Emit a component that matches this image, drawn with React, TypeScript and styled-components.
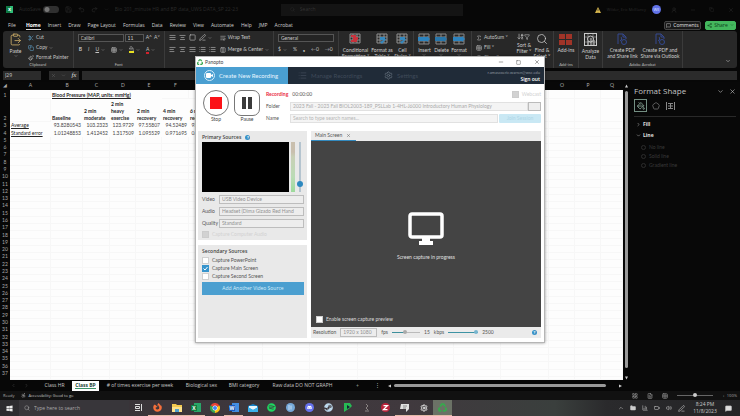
import React from "react";
import styled, { createGlobalStyle, css } from "styled-components";
import {
  AlignCenter, AlignJustify, AlignLeft, Battery, BarChart3, ChevronDown, ChevronLeft, ChevronRight, ChevronUp,
  ClipboardPaste, Copy, Disc, FileText, Folder, Grid3x3, LayoutGrid, List, MessageSquare, Minus, Paintbrush, PaintBucket,
  PenLine, Pentagon, Redo2, Save, Scissors, Search, Settings, Share2, Sigma, Square, Table, Undo2, Volume2,
  WrapText, X, ArrowDownAZ, Funnel, Columns3, Accessibility, UserRound,
} from "lucide-react";
import { FaDiscord, FaSpotify, FaSteam, FaWindows, FaFirefoxBrowser } from "react-icons/fa";

const Global = createGlobalStyle`
  *, *::before, *::after { box-sizing: border-box; }
  body { margin: 0; background: #050505; }
  button, input, select { font: inherit; color: inherit; margin: 0; padding: 0; border: 0; background: none; border-radius: 0; }
  svg { display: block; flex: none; }
`;

const ui = `"Open Sans", "Noto Sans", sans-serif`;
const compact = `Lato, "Liberation Sans", sans-serif`;

/* ---------- window frame ---------- */
const Page = styled.div`
  position: relative;
  display: flex;
  flex-direction: column;
  min-height: 100vh;
  overflow: hidden;
  background: #070707;
  color: #d0d0d0;
  font: 5px/7px ${ui};
  white-space: nowrap;
`;
const TitleBar = styled.header`
  display: flex;
  align-items: center;
  height: 19px;
  padding: 0 3px 0 6px;
  gap: 6px;
  color: #2b2b2b;
`;
const ExcelBadge = styled.span`
  display: grid;
  place-items: center;
  width: 7px;
  height: 7px;
  background: linear-gradient(90deg, #0f7a43 55%, #2dba77 55%);
  color: #fff;
  font-weight: 700;
`;
const AutoSave = styled.span`
  display: flex;
  align-items: center;
  gap: 2px;
`;
const Toggle = styled.span`
  width: 16px;
  height: 7px;
  border-radius: 4px;
  background: radial-gradient(circle at 4px 50%, #777 0 2px, #303030 3px);
`;
const DocName = styled.span`
  width: 140px;
  overflow: hidden;
`;
const TitleSearch = styled.label`
  display: flex;
  align-items: center;
  gap: 5px;
  flex: 1;
  max-width: 182px;
  height: 12px;
  margin-left: 20px;
  padding: 0 9px;
  background: #141414;
  input { width: 60px; &::placeholder { color: #333; opacity: 1; } }
`;
const TitleRight = styled.div`
  display: flex;
  align-items: center;
  gap: 6px;
  margin-left: auto;
  font-size: 4px;
`;
const Avatar = styled.span`
  display: grid;
  place-items: center;
  width: 9px;
  height: 9px;
  border-radius: 50%;
  background: #6172e8;
  color: #dfe3ff;
`;
const CaptionButton = styled.button`
  display: grid;
  place-items: center;
  width: 13px;
  height: 10px;
`;
const MenuBar = styled.nav`
  display: flex;
  align-items: center;
  gap: 7px;
  height: 12px;
  padding: 0 4px 0 8px;
`;
const MenuItem = styled.button<{ $active?: boolean }>`
  height: 10px;
  line-height: 8px;
  &:first-child { margin-right: 3px; }
  ${(p) => p.$active && css`color: #fff; font-weight: 700; border-bottom: 1px solid #ddd;`}
`;
const MenuActions = styled.div`
  display: flex;
  gap: 4px;
  margin-left: auto;
`;
const PillButton = styled.button<{ $green?: boolean }>`
  display: flex;
  align-items: center;
  justify-content: center;
  gap: 2px;
  width: ${(p) => (p.$green ? 31 : 37)}px;
  height: 9px;
  border: 1px solid ${(p) => (p.$green ? "#43b75d" : "#444")};
  border-radius: 2px;
  background: ${(p) => (p.$green ? "#43b75d" : "#191919")};
  color: ${(p) => (p.$green ? "#10401c" : "#e4e4e4")};
`;

/* ---------- ribbon ---------- */
const Ribbon = styled.section`
  display: flex;
  height: 37px;
  margin: 0 3px;
  border-radius: 3px;
  background: #282828;
  font-family: ${compact};
  overflow: hidden;
`;
const Group = styled.div<{ $w: number }>`
  position: relative;
  display: flex;
  flex: 0 0 ${(p) => p.$w}px;
  gap: 4px;
  padding: 2px 4px 0;
  border-right: 1px solid #3b3b3b;
`;
const GroupName = styled.span`
  position: absolute;
  left: 0;
  right: 0;
  bottom: 0;
  text-align: center;
  font-size: 4px;
  color: #bbb;
`;
const Stack = styled.div<{ $gap?: number }>`
  display: flex;
  flex-direction: column;
  gap: ${(p) => p.$gap ?? 3}px;
`;
const ToolRow = styled.div<{ $gap?: number }>`
  display: flex;
  align-items: center;
  gap: ${(p) => p.$gap ?? 5}px;
  height: 9px;
`;
const Tool = styled.button<{ $color?: string }>`
  display: flex;
  align-items: center;
  gap: 2px;
  height: 7px;
  color: ${(p) => p.$color ?? "#c4c4c4"};
`;
const BigTool = styled.button<{ $w: number }>`
  display: flex;
  flex-direction: column;
  align-items: center;
  flex: 0 0 ${(p) => p.$w}px;
  width: ${(p) => p.$w}px;
  height: 28px;
  line-height: 6px;
  color: #d0d0d0;
  svg { margin-bottom: 2px; }
`;
const DarkSelect = styled.select<{ $w: number }>`
  appearance: none;
  width: ${(p) => p.$w}px;
  height: 8px;
  padding: 0 2px;
  border: 1px solid #555;
  background: #242424;
  color: #c8c8c8;
`;
const Swatch = styled.span<{ $c: string }>`
  border-bottom: 2px solid ${(p) => p.$c};
  line-height: 6px;
`;
const Push = styled.span`
  margin: auto 6px 4px auto;
`;

const FormulaBar = styled.div`
  display: flex;
  gap: 3px;
  height: 9px;
  margin: 3px 3px 2px;
  color: #999;
`;
const NameBox = styled.input`
  width: 38px;
  padding: 0 2px;
  background: #2b2b2b;
  color: #ccc;
`;
const FormulaTools = styled.div`
  display: flex;
  align-items: center;
  justify-content: space-around;
  width: 30px;
  margin-left: 5px;
  background: #2b2b2b;
  i { font-family: "Liberation Serif", serif; font-size: 7px; color: #ddd; }
`;
const FormulaInput = styled.input`
  flex: 1;
  background: #2b2b2b;
`;

/* ---------- worksheet ---------- */
const Work = styled.main`
  display: flex;
  flex: 1;
  min-height: 0;
`;
const SheetArea = styled.div`
  display: flex;
  flex: 1;
  min-width: 0;
  background: #fdfdfd;
`;
const Sheet = styled.table`
  flex: 1;
  display: grid;
  grid-template-columns: minmax(0, 1fr);
  grid-template-rows: 8px 1fr;
  font-family: ${compact};
  line-height: 7px;
  color: #222;
  overflow: hidden;
`;
const columns = "10px 41px 32px 27px 26px 26px 27px 26px repeat(7, minmax(0, 1fr)) 26px 26px 22px";
const SheetHead = styled.thead`
  background: #080808;
  color: #aaa;
`;
const SheetBody = styled.tbody`
  display: grid;
  grid-template-columns: minmax(0, 1fr);
  grid-template-rows: 9px 23px repeat(35, minmax(7px, 1fr)) 3px;
`;
const SheetRow = styled.tr`
  display: grid;
  grid-template-columns: ${columns};
  min-height: 0;
`;
const RowNumber = styled.th`
  display: flex;
  align-items: flex-end;
  justify-content: center;
  padding: 0;
  background: #080808;
  color: #aaa;
  font-weight: 400;
  overflow: hidden;
`;
const ColName = styled.th`
  padding: 0;
  font-weight: 400;
`;
const Cell = styled.td<{ $kind?: "num" | "head" | "title" | "link" }>`
  display: flex;
  align-items: flex-end;
  min-width: 0;
  padding: 0 1px;
  border-right: 1px solid #f7f7f7;
  border-bottom: 1px solid #f7f7f7;
  white-space: pre;
  ${(p) => p.$kind && css`border-right-color: transparent; border-bottom: 0;`}
  ${(p) => p.$kind === "num" && css`justify-content: flex-end; color: #444;`}
  ${(p) => (p.$kind === "head" || p.$kind === "title") && css`font-weight: 700;`}
  ${(p) => (p.$kind === "title" || p.$kind === "link") && css`text-decoration: underline;`}
`;
const ScrollTrack = styled.div`
  display: flex;
  flex-direction: column;
  align-items: center;
  width: 7px;
  padding-top: 2px;
  color: #bbb;
`;
const ScrollThumb = styled.div`
  flex: 1;
  width: 3px;
  margin: 3px 0 8px;
  border-radius: 2px;
  background: #9a9a9a;
`;

const FormatPane = styled.aside`
  width: 110px;
  padding: 3px 4px;
  background: #080808;
`;
const PaneHead = styled.div`
  display: flex;
  align-items: center;
  gap: 5px;
  height: 12px;
  color: #c4c4c4;
  h2 { flex: 1; margin: 0; font-size: 8px; font-weight: 400; line-height: 12px; }
`;
const PaneTabs = styled.div`
  display: flex;
  gap: 2px;
  margin-top: 2px;
  padding-bottom: 4px;
  border-bottom: 1px solid #292929;
`;
const PaneTab = styled.button<{ $active?: boolean }>`
  display: grid;
  place-items: center;
  width: 13px;
  height: 13px;
  color: #888;
  border: 1px solid ${(p) => (p.$active ? "#748f83" : "transparent")};
`;
const PaneSection = styled.button`
  display: flex;
  align-items: center;
  gap: 2px;
  height: 7px;
  margin: 4px 0 0 2px;
  color: #e0e0e0;
  font-weight: 700;
`;
const RadioList = styled.div`
  display: grid;
  gap: 2px;
  padding: 5px 0 0 7px;
`;
const RadioRow = styled.label`
  display: flex;
  align-items: center;
  gap: 3px;
  height: 7px;
  color: #3a3a3a;
  font-family: ${compact};
  input { appearance: none; width: 5px; height: 5px; border: 1px solid #2c2c2c; border-radius: 50%; }
`;

const Tabs = styled.nav`
  display: flex;
  align-items: center;
  height: 11px;
  padding-left: 11px;
  color: #c8c8c8;
`;
const SheetTab = styled.button<{ $active?: boolean; $w: number }>`
  flex: 0 0 ${(p) => p.$w}px;
  height: 10px;
  line-height: 9px;
  text-align: center;
  ${(p) => p.$active && css`
    background: #fff; color: #254536; font-weight: 700;
    span { border-bottom: 1px solid #3b9168; }
  `}
`;
const TabArrow = styled.button`
  width: 13px;
  color: #555;
`;
const HScroll = styled.div`
  display: flex;
  align-items: center;
  gap: 3px;
  flex: 1;
  margin-right: 118px;
  span { margin-right: 5px; }
  div { flex: 1; height: 3px; margin-right: 10px; border-radius: 2px; background: #999; }
`;
const Status = styled.footer`
  display: flex;
  align-items: center;
  gap: 7px;
  height: 9px;
  padding: 0 3px;
  background: #111;
  color: #aaa;
  font-size: 4px;
`;
const ViewTools = styled.div`
  display: flex;
  align-items: center;
  gap: 9px;
  margin-left: auto;
`;
const Range = styled.input<{ $track?: string; $thumb?: string; $w: number }>`
  appearance: none;
  width: ${(p) => p.$w}px;
  height: 6px;
  &::-webkit-slider-runnable-track { height: 1px; background: ${(p) => p.$track ?? "#666"}; }
  &::-webkit-slider-thumb {
    appearance: none; width: 4px; height: 4px; margin-top: -2px; border-radius: 50%;
    background: ${(p) => p.$thumb ?? "#ccc"};
  }
`;

/* ---------- taskbar ---------- */
const TaskBar = styled.nav`
  display: flex;
  align-items: stretch;
  height: 16px;
  background: linear-gradient(90deg, #2c2b2e, #3c363b 22%, #40393e 55%, #3a3f3d 75%, #2a2a2c 82%, #242426);
`;
const StartButton = styled.button`
  display: grid;
  place-items: center;
  width: 19px;
  color: #eee;
`;
const TaskSearch = styled.label`
  display: flex;
  align-items: center;
  gap: 4px;
  width: 110px;
  padding-left: 5px;
  background: #38363a;
  color: #aaa;
  input { width: 80px; &::placeholder { color: #aaa; opacity: 1; } }
`;
const TaskIcon = styled.button<{ $open?: boolean; $active?: boolean }>`
  display: grid;
  place-items: center;
  width: 19px;
  color: #e6e6e6;
  border-bottom: 1px solid ${(p) => (p.$open ? "#e3b9a7" : "transparent")};
  background: ${(p) => (p.$active ? "#6b7266" : "none")};
`;
const Tray = styled.div`
  display: flex;
  align-items: center;
  gap: 6px;
  margin-left: auto;
  padding-right: 8px;
  color: #c8c8c8;
`;
const Clock = styled.time`
  width: 28px;
  text-align: center;
  line-height: 7px;
`;

/* ---------- recorder dialog ---------- */
const Recorder = styled.section`
  position: absolute;
  inset: 56px 195px 73px;
  display: flex;
  flex-direction: column;
  border: 1px solid #b5b5b5;
  background: #fff;
  color: #555;
  font-family: ${compact};
  box-shadow: 0 0 3px rgba(0, 0, 0, 0.4);
`;
const RecTitle = styled.header`
  display: flex;
  align-items: center;
  gap: 2px;
  height: 10px;
  padding: 0 1px;
  color: #444;
`;
const RecCaption = styled.div`
  display: flex;
  gap: 5px;
  margin-left: auto;
`;
const RecNav = styled.nav`
  display: flex;
  align-items: stretch;
  height: 17px;
  background: #202b38;
`;
const NavTab = styled.button<{ $w: number; $active?: boolean }>`
  display: flex;
  align-items: center;
  gap: 4px;
  width: ${(p) => p.$w}px;
  padding-left: ${(p) => (p.$active ? 8 : 10)}px;
  font-size: 6px;
  color: ${(p) => (p.$active ? "#e8f5ff" : "#3f4a58")};
  background: ${(p) => (p.$active ? "#4a9fd1" : "none")};
`;
const CamRing = styled.span`
  display: grid;
  place-items: center;
  width: 11px;
  height: 11px;
  border: 1px solid #d4ecfa;
  border-radius: 50%;
`;
const Account = styled.div`
  margin-left: auto;
  padding: 2px 4px 0 0;
  text-align: right;
  color: #8a939d;
  font-size: 4px;
  a { display: block; color: #fff; font: 600 5px/7px ${ui}; text-decoration: none; }
`;
const Controls = styled.div`
  display: grid;
  grid-template-columns: 26px 26px 1fr;
  gap: 5px;
  height: 47px;
  padding: 6px 3px 0 7px;
`;
const BigControl = styled.button<{ $round?: boolean }>`
  display: flex;
  flex-direction: column;
  align-items: center;
  color: #444;
  > span {
    display: flex; align-items: center; justify-content: center; gap: 2px;
    width: 26px; height: 26px;
    border: 1px solid #777; border-radius: ${(p) => (p.$round ? "50%" : "7px")};
  }
`;
const StopMark = styled.i`
  width: 12px;
  height: 12px;
  background: #fb1217;
`;
const PauseMark = styled.i`
  width: 4px;
  height: 12px;
  background: #3b3b3b;
`;
const Fields = styled.div`
  display: grid;
  grid-template-columns: 24px 1fr;
  grid-template-rows: 9px 9px 9px;
  row-gap: 3px;
  align-items: center;
  padding-left: 1px;
`;
const RecLine = styled.div`
  grid-column: 1 / -1;
  display: flex;
  gap: 4px;
  b { color: #ea2e3f; }
`;
const FieldRow = styled.div`
  display: flex;
  height: 9px;
`;
const TextBox = styled.input`
  flex: 1;
  min-width: 0;
  padding: 0 2px;
  border: 1px solid #e1e1e1;
  background: #f4f4f4;
  color: #aaa;
  &::placeholder { color: #b5b5b5; opacity: 1; }
`;
const Browse = styled.button`
  width: 13px;
  border: 1px solid #bbb;
  background: #eee;
  line-height: 5px;
`;
const Join = styled.button`
  width: 42px;
  margin-left: 1px;
  border-radius: 1px;
  background: #c9e8f4;
  color: #aed6e7;
`;
const Check = styled.label<{ $dim?: boolean }>`
  display: flex;
  align-items: center;
  gap: 3px;
  color: ${(p) => (p.$dim ? "#d2d2d2" : "#555")};
  input {
    appearance: none; width: 7px; height: 7px; flex: none;
    border: 1px solid ${(p) => (p.$dim ? "#ccc" : "#d0d0d0")};
    background: ${(p) => (p.$dim ? "#d2d2d2" : "#fff")};
  }
  input:checked {
    border-color: #3794cc;
    background: #3794cc url("data:image/svg+xml,%3Csvg xmlns='http://www.w3.org/2000/svg' viewBox='0 0 10 10'%3E%3Cpath d='M1 5l3 3L9 2' fill='none' stroke='white' stroke-width='2'/%3E%3C/svg%3E") center / contain;
  }
`;
const RecMain = styled.div`
  display: grid;
  grid-template-columns: 109px 1fr;
  gap: 4px;
  flex: 1;
  min-height: 0;
  padding: 0 3px 4px 2px;
`;
const Sources = styled.div`
  display: flex;
  flex-direction: column;
  gap: 5px;
  min-height: 0;
`;
const Panel = styled.section<{ $grow?: boolean }>`
  flex: ${(p) => (p.$grow ? "1" : "none")};
  padding: 2px 3px 2px 4px;
  background: #e9e9e9;
  h3 { display: flex; align-items: center; gap: 4px; margin: 0; font: 600 5px/9px ${ui}; color: #444; }
`;
const Help = styled.span`
  display: grid;
  place-items: center;
  width: 5px;
  height: 5px;
  border-radius: 50%;
  background: #3690c6;
  color: #fff;
  font: 700 4px/5px ${ui};
`;
const PreviewRow = styled.div`
  display: grid;
  grid-template-columns: 1fr 5px 8px;
  gap: 1px;
  height: 50px;
  margin-bottom: 3px;
`;
const CameraView = styled.div`
  background: #000;
`;
const Meter = styled.div`
  margin-left: 1px;
  background: linear-gradient(#c9bfae 0 20%, #c8d0b6 30%, #bbdcb6 70%, #9cda9b);
`;
const Volume = styled.input`
  appearance: none;
  writing-mode: vertical-lr;
  direction: rtl;
  width: 8px;
  height: 50px;
  background: linear-gradient(90deg, transparent 3px, #b5c4cf 3px 5px, transparent 5px);
  &::-webkit-slider-thumb { appearance: none; width: 6px; height: 6px; border-radius: 50%; background: #2d88bf; }
`;
const SourceField = styled.label`
  display: grid;
  grid-template-columns: 17px 1fr;
  align-items: center;
  height: 9px;
  margin-bottom: 3px;
`;
const LightSelect = styled.select`
  appearance: none;
  height: 9px;
  min-width: 0;
  padding: 0 2px;
  border: 1px solid #bdbdbd;
  background: #ededed;
  color: #929292;
`;
const CheckList = styled.div`
  display: grid;
  gap: 1px;
  margin: 1px 0 2px;
`;
const AddButton = styled.button`
  width: 100%;
  height: 13px;
  background: #4b9fd0;
  color: #d9effc;
  font-family: ${ui};
`;
const Viewer = styled.section`
  display: grid;
  grid-template-rows: 10px 1fr 11px;
  min-height: 0;
  background: #ebebeb;
`;
const ViewTab = styled.button`
  display: flex;
  align-items: center;
  justify-content: space-between;
  width: 45px;
  padding: 0 5px 0 4px;
  border-bottom: 1px solid #338abf;
`;
const Stage = styled.div`
  display: flex;
  flex-direction: column;
  background: #444;
  color: #e0e0e0;
`;
const StageCenter = styled.div`
  display: flex;
  flex: 1;
  flex-direction: column;
  align-items: center;
  justify-content: center;
  gap: 9px;
  padding-top: 16px;
`;
const StageFoot = styled.div`
  padding: 0 5px 4px;
  label { color: #ddd; }
`;
const Encode = styled.div`
  display: flex;
  align-items: center;
  gap: 4px;
  padding: 0 4px 0 2px;
  select { width: 37px; }
  label { display: flex; align-items: center; gap: 4px; }
`;
const End = styled.span`
  margin-left: auto;
`;

/* ---------- drawings ---------- */
const PanoptoMark = ({ s = 6 }: { s?: number }) => (
  <svg width={s} height={s} viewBox="0 0 24 24" fill="none" stroke="#38a84d" strokeWidth="5">
    <path d="M6 9 L10 3 H15 L19 9" /><path d="M20 12 L22 18 L18 21 H13" /><path d="M9 21 H4 L2 17 L5 12" />
  </svg>
);
const MonitorMark = () => (
  <svg width="36" height="33" viewBox="0 0 36 33">
    <rect x="2" y="2" width="32" height="23" rx="2" fill="none" stroke="#fff" strokeWidth="3.500" />
    <path d="M14 26h8v3h3v4H11v-4h3z" fill="#fff" />
  </svg>
);
const CameraMark = () => (
  <svg width="7" height="5" viewBox="0 0 7 5" fill="#fff"><rect width="5" height="5" rx="1" /><path d="M5 2l2-1v3l-2-1z" /></svg>
);
const Triangle = ({ dir }: { dir: "up" | "down" | "left" | "right" }) => {
  const d = { up: "M0 4l2-4 2 4z", down: "M0 0l2 4 2-4z", left: "M4 0L0 2l4 2z", right: "M0 0l4 2-4 2z" }[dir];
  return <svg width="3" height="4" viewBox="0 0 4 4"><path d={d} fill="#ccc" /></svg>;
};
const TableMark = ({ c, arrow }: { c: string; arrow?: boolean }) => (
  <svg width="12" height="12" viewBox="0 0 12 12">
    <path d="M1 1h10v9H1zM1 4h10M1 7h10M4 1v9M8 1v9" fill="none" stroke="#909090" strokeWidth="1" />
    <rect x="4" y="4" width="5" height="3" fill={c} />
    {arrow ? <path d="M11 5l-5 6-2-2z" fill={c} /> : <path d="M2 2h5v2H2zM2 7h6v2H2z" fill={c} />}
  </svg>
);
const CellMark = ({ c }: { c: string }) => (
  <svg width="12" height="12" viewBox="0 0 12 12">
    <path d="M1 1h10v10H1zM1 4h10M1 8h10M6 1v10" fill="none" stroke="#888" />
    <rect y="4" width="9" height="4" fill={c} /><path d="M9 3l3 3-3 3z" fill={c} />
  </svg>
);
const AddinMark = () => (
  <svg width="13" height="12" viewBox="0 0 13 12" fill="#a03428">
    <rect y="1" width="6" height="5" /><rect x="7" y="1" width="6" height="5" /><rect y="7" width="6" height="5" /><rect x="7" y="7" width="6" height="5" />
  </svg>
);
const AnalyzeMark = () => (
  <svg width="13" height="13" viewBox="0 0 13 13" fill="none" stroke="#ccc">
    <rect x="0.500" y="0.500" width="12" height="12" /><path d="M1 4h11M1 9h11M4 1v11M9 1v11" stroke="#777" />
    <circle cx="6.500" cy="6" r="3" fill="#333" /><path d="M4 12V8M7 12V5M10 12V7" />
  </svg>
);
const PdfMark = () => (
  <svg width="12" height="12" viewBox="0 0 12 12" fill="none" stroke="#34498f">
    <path d="M2 11V1h5l3 3v2M7 1v3h3" /><circle cx="8" cy="9" r="2.500" /><path d="M4 8c2-1 2-3 1-4" />
  </svg>
);
const SizeMark = () => (
  <svg width="9" height="8" viewBox="0 0 9 8" fill="none" stroke="#888"><path d="M.5 0v8M8.500 0v8M2 1.500h5M2 6.500h5M4.500 1v6M2 4h5" /></svg>
);
const TaskViewMark = () => (
  <svg width="7" height="7" viewBox="0 0 7 7" fill="none" stroke="#ddd"><path d="M.5 2.500h4v2h-4zM0 .5h5M0 6.500h5M6.500 0v7" /></svg>
);
const ChromeMark = () => (
  <svg width="10" height="10" viewBox="0 0 20 20">
    <path d="M10 10L1.300 5A10 10 0 0 1 18.700 5z" fill="#e94335" /><path d="M10 10L18.700 5A10 10 0 0 1 10 20z" fill="#fbc116" />
    <path d="M10 10L10 20A10 10 0 0 1 1.300 5z" fill="#34a853" /><circle cx="10" cy="10" r="5" fill="#fff" /><circle cx="10" cy="10" r="4" fill="#4285f4" />
  </svg>
);
const FolderMark = () => (
  <svg width="10" height="8" viewBox="0 0 10 8"><path d="M0 0h4l1 1h5v7H0z" fill="#f3c94f" /><path d="M0 3h10v5H0z" fill="#fbe18c" /><path d="M3 5h4v3H3z" fill="#4f9fcd" /></svg>
);
const OfficeMark = ({ a, b, t }: { a: string; b: string; t: string }) => (
  <svg width="10" height="9" viewBox="0 0 10 9">
    <rect x="3" width="7" height="9" fill={b} /><rect y="2" width="6" height="6" fill={a} />
    <text x="3" y="7" textAnchor="middle" fontSize="5" fontWeight="700" fill="#fff" fontFamily="Open Sans">{t}</text>
  </svg>
);
const MailMark = () => (
  <svg width="10" height="8" viewBox="0 0 10 8"><path d="M0 2l5-2 5 2v6H0z" fill="#1683c9" /><path d="M1 2h8v2L5 6 1 4z" fill="#e9f5fc" /><path d="M0 3l5 3 5-3v5H0z" fill="#39b1ec" /></svg>
);
const DiscMark = ({ c, children }: { c: string; children?: React.ReactNode }) => (
  <svg width="9" height="9" viewBox="0 0 18 18"><circle cx="9" cy="9" r="9" fill={c} />{children}</svg>
);
const PlayMark = () => (
  <svg width="8" height="9" viewBox="0 0 8 9"><path d="M0 0h6l2 3-2 2-6 4z" fill="#27ba54" /><path d="M3 2l3 2-3 2z" fill="#123" /></svg>
);
const LampMark = () => (
  <svg width="6" height="9" viewBox="0 0 6 9" fill="none" stroke="#8b8585"><path d="M2 1l2 2-2 2 2 2M1 8h4" /></svg>
);
const CardsMark = () => (
  <svg width="9" height="8" viewBox="0 0 9 8"><path d="M1 0h8v5l-3 3V5H0z" fill="#dedede" /><path d="M3 2h4M3 4h3" stroke="#888" /></svg>
);

/* ---------- data ---------- */
const letters = "ABCDEFGHIJKLMNOPQ".split("");
const menu = ["File", "Home", "Insert", "Draw", "Page Layout", "Formulas", "Data", "Review", "View", "Automate", "Help", "JMP", "Acrobat"];
const heads = ["", "Baseline", "2 min\nmoderate", "2 min\nheavy\nexercise", "2 min\nrecovery", "4 min\nrecovery", "6 min\nrecovery"];
const rows: Record<number, string[]> = {
  3: ["Average", "93.8280543", "103.2323", "123.9729", "97.55807", "94.52489", "93.21548"],
  4: ["Standard error", "1.01248853", "1.412452", "1.317509", "1.095529", "0.971695", "0.984512"],
};
const sheetTabs: [string, number][] = [
  ["Class HR", 35], ["Class BP", 27], ["# of times exercise per week", 82], ["Biological sex", 41], ["BMI category", 44], ["Raw data DO NOT GRAPH", 73],
];

function cellsFor(n: number) {
  return letters.map((l, i) => {
    if (n === 1 && i === 1) return <Cell key={l} $kind="title">Blood Pressure (MAP, units: mmHg)</Cell>;
    if (n === 1 && i > 1 && i < 5) return <Cell key={l} $kind="num" />;
    if (n === 2 && heads[i]) return <Cell key={l} $kind="head">{heads[i]}</Cell>;
    const v = rows[n]?.[i];
    if (v) return <Cell key={l} $kind={i === 0 ? "link" : "num"}>{v}</Cell>;
    return <Cell key={l} />;
  });
}

const icon = { size: 7, strokeWidth: 2 };

export default function App() {
  return (
    <Page>
      <Global />
      <TitleBar>
        <ExcelBadge>x</ExcelBadge>
        <AutoSave>AutoSave <Toggle /></AutoSave>
        <Save {...icon} /><Undo2 {...icon} /><Redo2 {...icon} /><ChevronDown size={5} />
        <DocName>Bio 201_minute HR and BP data_UWS DATA_SP 22-23</DocName>
        <TitleSearch><Search size={5} /><input aria-label="Search" placeholder="Search" /></TitleSearch>
        <TitleRight>
          <svg width="6" height="6" viewBox="0 0 6 6"><path d="M3 0l3 6H0z" fill="#d5b44a" /><path d="M3 2v2M3 5v.5" stroke="#333" strokeWidth=".7" /></svg>
          <span>Wilder, Eric McElancy</span><Avatar>WE</Avatar>
          <CaptionButton aria-label="Account"><UserRound size={6} /></CaptionButton>
          <CaptionButton aria-label="Minimize"><Minus size={6} /></CaptionButton>
          <CaptionButton aria-label="Restore"><Copy size={5} /></CaptionButton>
          <CaptionButton aria-label="Close"><X size={6} /></CaptionButton>
        </TitleRight>
      </TitleBar>
      <MenuBar>
        {menu.map((m) => <MenuItem key={m} $active={m === "Home"}>{m}</MenuItem>)}
        <MenuActions>
          <PillButton><MessageSquare size={5} />Comments</PillButton>
          <PillButton $green><Share2 size={5} />Share<ChevronDown size={4} /></PillButton>
        </MenuActions>
      </MenuBar>

      <Ribbon>
        <Group $w={68}>
          <BigTool $w={17}><ClipboardPaste size={13} color="#d3b36b" strokeWidth={1.5} />Paste<ChevronDown size={4} /></BigTool>
          <Stack $gap={1}>
            <ToolRow><Tool><Scissors size={6} color="#62a5cf" />Cut</Tool></ToolRow>
            <ToolRow><Tool><Copy size={6} color="#62a5cf" />Copy<ChevronDown size={4} /></Tool></ToolRow>
            <ToolRow><Tool><Paintbrush size={6} />Format Painter</Tool></ToolRow>
          </Stack>
          <GroupName>Clipboard</GroupName>
        </Group>
        <Group $w={91}>
          <Stack>
            <ToolRow $gap={1}>
              <DarkSelect $w={46} aria-label="Font"><option>Calibri</option></DarkSelect>
              <DarkSelect $w={19} aria-label="Font size"><option>11</option></DarkSelect>
              <Tool>&nbsp;A^</Tool><Tool>&nbsp;A˅</Tool>
            </ToolRow>
            <ToolRow $gap={6}>
              <Tool><b>&nbsp;B</b></Tool><Tool><i>I</i></Tool><Tool><u>U</u><ChevronDown size={4} /></Tool>
              <Tool><Grid3x3 size={6} /><ChevronDown size={4} /></Tool>
              <Tool><Swatch $c="#e8e121"><PaintBucket size={5} /></Swatch><ChevronDown size={4} /></Tool>
              <Tool><Swatch $c="#d2222c">A</Swatch><ChevronDown size={4} /></Tool>
            </ToolRow>
          </Stack>
          <GroupName>Font</GroupName>
        </Group>
        <Group $w={109}>
          <Stack>
            <ToolRow $gap={3}><Tool><AlignJustify {...icon} /></Tool><Tool><AlignCenter {...icon} /></Tool><Tool><Square {...icon} /></Tool><Tool><PenLine {...icon} /><ChevronDown size={4} /></Tool></ToolRow>
            <ToolRow $gap={3}><Tool><AlignLeft {...icon} /></Tool><Tool><AlignCenter {...icon} /></Tool><Tool><AlignJustify {...icon} /></Tool><Tool><List {...icon} /></Tool><Tool><List {...icon} /></Tool></ToolRow>
          </Stack>
          <Stack>
            <ToolRow><Tool><WrapText size={6} />Wrap Text</Tool></ToolRow>
            <ToolRow><Tool><Columns3 size={6} />Merge &amp; Center<ChevronDown size={4} /></Tool></ToolRow>
          </Stack>
        </Group>
        <Group $w={63}>
          <Stack>
            <ToolRow><DarkSelect $w={56} aria-label="Number format"><option>General</option></DarkSelect></ToolRow>
            <ToolRow $gap={6}><Tool>$<ChevronDown size={4} /></Tool><Tool>%</Tool><Tool><b>❟</b></Tool><Tool>←0</Tool><Tool>→0</Tool></ToolRow>
          </Stack>
        </Group>
        <Group $w={74}>
          <BigTool $w={25}><TableMark c="#c8323c" />Conditional<span>Formatting ˅</span></BigTool>
          <BigTool $w={20}><TableMark c="#3688bd" arrow />Format as<span>Table ˅</span></BigTool>
          <BigTool $w={13}><TableMark c="#3688bd" arrow />Cell<span>Styles ˅</span></BigTool>
        </Group>
        <Group $w={58}>
          <BigTool $w={13}><CellMark c="#2d83be" />Insert<ChevronDown size={4} /></BigTool>
          <BigTool $w={13}><CellMark c="#2876aa" />Delete<ChevronDown size={4} /></BigTool>
          <BigTool $w={14}><CellMark c="#2d83be" />Format<ChevronDown size={4} /></BigTool>
        </Group>
        <Group $w={82}>
          <Stack $gap={1}>
            <ToolRow><Tool><Sigma size={6} />AutoSum ˅</Tool></ToolRow>
            <ToolRow><Tool><Table size={6} />Fill ˅</Tool></ToolRow>
            <ToolRow><Tool><Disc size={6} />Clear ˅</Tool></ToolRow>
          </Stack>
          <End><BigTool $w={14}><ToolRow $gap={0}><ArrowDownAZ size={7} /><Funnel size={6} /></ToolRow><span>Sort &amp;</span><span>Filter ˅</span></BigTool></End>
          <BigTool $w={14}><Search size={12} strokeWidth={1.5} />Find &amp;<span>Select ˅</span></BigTool>
        </Group>
        <Group $w={25}><BigTool $w={16}><AddinMark />Add-ins</BigTool><GroupName>Add-ins</GroupName></Group>
        <Group $w={23}><BigTool $w={15}><AnalyzeMark />Analyze<span>Data</span></BigTool></Group>
        <Group $w={79}>
          <BigTool $w={31}><PdfMark />Create PDF<span>and Share link</span></BigTool>
          <BigTool $w={36}><PdfMark />Create PDF and<span>Share via Outlook</span></BigTool>
          <GroupName>Adobe Acrobat</GroupName>
        </Group>
        <Push><ChevronDown size={6} /></Push>
      </Ribbon>

      <FormulaBar>
        <NameBox aria-label="Name box" defaultValue="J29" />
        <FormulaTools><X size={5} color="#666" /><ChevronDown size={5} color="#666" /><i>fx</i></FormulaTools>
        <FormulaInput aria-label="Formula" />
      </FormulaBar>

      <Work>
        <SheetArea>
          <Sheet>
            <SheetHead><SheetRow><ColName>◢</ColName>{letters.map((l) => <ColName key={l}>{l}</ColName>)}</SheetRow></SheetHead>
            <SheetBody>
              {Array.from({ length: 38 }, (_, i) => (
                <SheetRow key={i}><RowNumber>{i < 37 ? i + 1 : ""}</RowNumber>{cellsFor(i + 1)}</SheetRow>
              ))}
            </SheetBody>
          </Sheet>
        </SheetArea>
        <ScrollTrack><Triangle dir="up" /><ScrollThumb /><Triangle dir="down" /></ScrollTrack>
        <FormatPane>
          <PaneHead><h2>Format Shape</h2><ChevronDown size={7} /><X size={7} /></PaneHead>
          <PaneTabs>
            <PaneTab $active aria-label="Fill and line"><PaintBucket size={8} color="#a9cdbb" /></PaneTab>
            <PaneTab aria-label="Effects"><Pentagon size={8} /></PaneTab>
            <PaneTab aria-label="Size"><SizeMark /></PaneTab>
          </PaneTabs>
          <PaneSection><ChevronRight size={5} />Fill</PaneSection>
          <PaneSection><ChevronDown size={5} />Line</PaneSection>
          <RadioList>
            {["No line", "Solid line", "Gradient line"].map((t) => <RadioRow key={t}><input type="radio" name="line" disabled />{t}</RadioRow>)}
          </RadioList>
        </FormatPane>
      </Work>

      <Tabs>
        <TabArrow aria-label="Previous sheet"><ChevronLeft size={5} /></TabArrow>
        <TabArrow aria-label="Next sheet"><ChevronRight size={5} /></TabArrow>
        {sheetTabs.map(([t, w]) => <SheetTab key={t} $w={w} $active={t === "Class BP"}><span>{t}</span></SheetTab>)}
        <SheetTab $w={36} aria-label="Add sheet">＋</SheetTab>
        <HScroll><span>⋮</span><Triangle dir="left" /><div /><Triangle dir="right" /></HScroll>
      </Tabs>
      <Status>
        <span>Ready</span><Tool><Accessibility size={5} />Accessibility: Good to go</Tool>
        <ViewTools>
          <LayoutGrid size={6} /><FileText size={6} /><Table size={6} />
          <Range $w={36} type="range" aria-label="Zoom" /><span>+&nbsp; 100%</span>
        </ViewTools>
      </Status>

      <TaskBar>
        <StartButton aria-label="Start"><FaWindows size={7} /></StartButton>
        <TaskSearch><Search size={6} /><input aria-label="Windows search" placeholder="Type here to search" /></TaskSearch>
        <TaskIcon aria-label="Task view"><TaskViewMark /></TaskIcon>
        <TaskIcon $open aria-label="Firefox"><FaFirefoxBrowser size={9} color="#f5703b" /></TaskIcon>
        <TaskIcon $open aria-label="Files"><FolderMark /></TaskIcon>
        <TaskIcon $open aria-label="Excel"><OfficeMark a="#107c41" b="#29a568" t="X" /></TaskIcon>
        <TaskIcon aria-label="Chrome"><ChromeMark /></TaskIcon>
        <TaskIcon $open aria-label="Word"><OfficeMark a="#185abd" b="#438de0" t="W" /></TaskIcon>
        <TaskIcon aria-label="Mail"><MailMark /></TaskIcon>
        <TaskIcon aria-label="Spotify"><FaSpotify size={9} color="#1ed760" /></TaskIcon>
        <TaskIcon aria-label="Browser"><DiscMark c="#76a8d8"><path d="M6 4v10M10 5v8" stroke="#c6ddf2" strokeWidth="2" /></DiscMark></TaskIcon>
        <TaskIcon aria-label="Discord"><DiscMark c="#6571ee"><FaDiscord x={4} y={4} size={10} color="#fff" /></DiscMark></TaskIcon>
        <TaskIcon aria-label="Steam"><FaSteam size={9} color="#bcd7ec" /></TaskIcon>
        <TaskIcon aria-label="Player"><PlayMark /></TaskIcon>
        <TaskIcon aria-label="Lamp"><LampMark /></TaskIcon>
        <TaskIcon aria-label="Zotero"><DiscMark c="#ba243b"><path d="M5 5h8l-8 8h8" fill="none" stroke="#fff" strokeWidth="2.500" /></DiscMark></TaskIcon>
        <TaskIcon $open aria-label="Cards"><CardsMark /></TaskIcon>
        <TaskIcon $open aria-label="Settings"><Settings size={8} strokeWidth={3} /></TaskIcon>
        <TaskIcon $open $active aria-label="Panopto"><PanoptoMark s={9} /></TaskIcon>
        <Tray>
          <ChevronUp size={6} /><Folder size={6} fill="#ccc" /><BarChart3 size={6} /><Battery size={6} /><Volume2 size={6} /><PenLine size={7} />
          <Clock>8:24 PM<br />11/8/2023</Clock><MessageSquare size={7} fill="#ddd" />
        </Tray>
      </TaskBar>

      <Recorder>
        <RecTitle>
          <PanoptoMark />Panopto
          <RecCaption>
            <CaptionButton aria-label="Minimize"><Minus size={6} /></CaptionButton>
            <CaptionButton aria-label="Maximize"><Square size={5} /></CaptionButton>
            <CaptionButton aria-label="Close"><X size={6} /></CaptionButton>
          </RecCaption>
        </RecTitle>
        <RecNav>
          <NavTab $w={92} $active><CamRing><CameraMark /></CamRing>Create New Recording</NavTab>
          <NavTab $w={86}><List size={9} />Manage Recordings</NavTab>
          <NavTab $w={60}><Settings size={9} color="#65717e" />Settings</NavTab>
          <Account>r.amascoeric.warren@wsc.edu<a href="#signout">Sign out</a></Account>
        </RecNav>
        <Controls>
          <BigControl $round><span><StopMark /></span>Stop</BigControl>
          <BigControl><span><PauseMark /><PauseMark /></span>Pause</BigControl>
          <Fields>
            <RecLine><b>Recording</b><span>00:00:00</span><End><Check $dim><input type="checkbox" disabled />Webcast</Check></End></RecLine>
            <label htmlFor="folder">Folder</label>
            <FieldRow><TextBox id="folder" defaultValue="2023 Fall - 2023 Fall BIOL2003-189_PSLLab 1-4HL-J6000 Introductory Human Physiology" /><Browse aria-label="Browse folders" /></FieldRow>
            <label htmlFor="name">Name</label>
            <FieldRow><TextBox id="name" placeholder="Search to type search names..." /><Join>Join Session</Join></FieldRow>
          </Fields>
        </Controls>
        <RecMain>
          <Sources>
            <Panel>
              <h3>Primary Sources <Help>?</Help></h3>
              <PreviewRow><CameraView /><Meter /><Volume type="range" aria-label="Volume" defaultValue={11} /></PreviewRow>
              <SourceField>Video<LightSelect><option>USB Video Device</option></LightSelect></SourceField>
              <SourceField>Audio<LightSelect><option>Headset (Dima Gizado Red Hand</option></LightSelect></SourceField>
              <SourceField>Quality<LightSelect><option>Standard</option></LightSelect></SourceField>
              <Check $dim><input type="checkbox" disabled />Capture Computer Audio</Check>
            </Panel>
            <Panel $grow>
              <h3>Secondary Sources</h3>
              <CheckList>
                <Check><input type="checkbox" />Capture PowerPoint</Check>
                <Check><input type="checkbox" defaultChecked />Capture Main Screen</Check>
                <Check><input type="checkbox" />Capture Second Screen</Check>
              </CheckList>
              <AddButton>Add Another Video Source</AddButton>
            </Panel>
          </Sources>
          <Viewer>
            <ViewTab>Main Screen <X size={5} /></ViewTab>
            <Stage>
              <StageCenter><MonitorMark />Screen capture in progress</StageCenter>
              <StageFoot><Check><input type="checkbox" />Enable screen capture preview</Check></StageFoot>
            </Stage>
            <Encode>
              <label>Resolution <LightSelect><option>1920 x 1080</option></LightSelect></label>
              <label>fps <Range $w={28} $track="linear-gradient(90deg,#3d8f9c 45%,#bbb 45%)" $thumb="#aaa" type="range" defaultValue={45} />15</label>
              <label>kbps <Range $w={30} $track="#3d93a4" $thumb="#78b6cf" type="range" defaultValue={100} />2500</label>
              <End><Help>?</Help></End>
            </Encode>
          </Viewer>
        </RecMain>
      </Recorder>
    </Page>
  );
}
